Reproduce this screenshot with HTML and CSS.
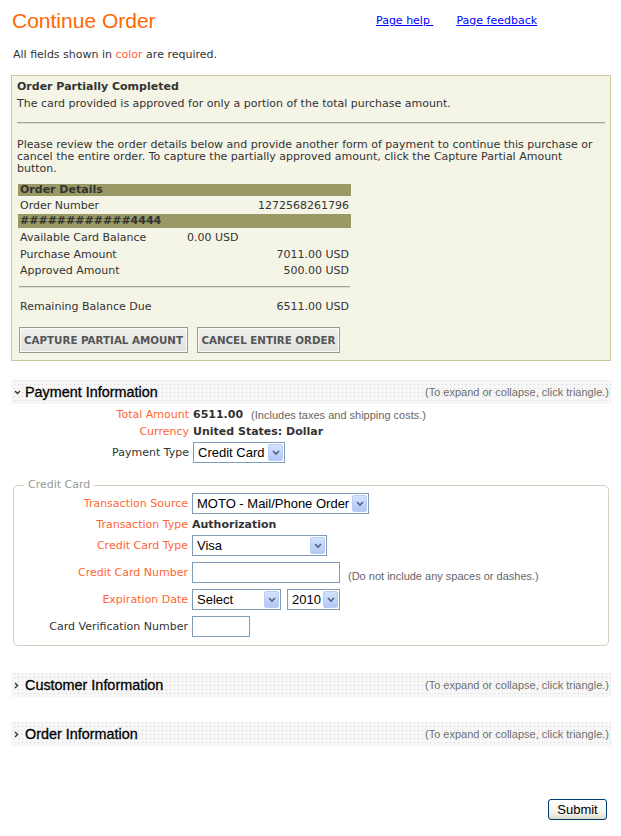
FILE: index.html
```html
<!DOCTYPE html>
<html lang="en">
<head>
  <meta charset="UTF-8" />
  <meta name="viewport" content="width=device-width, initial-scale=1.0"/>
  <title>Continue Order</title>
  <link rel="stylesheet" href="styles.css">
</head>
<body>
  <div class="page">
    <div class="page-head">
      <h1>Continue Order</h1>
      <div class="help-links">
        <a href="#">Page help </a>
        <a href="#">Page feedback</a>
      </div>
    </div>

    <p class="required-note">All fields shown in <span class="req">color</span> are required.</p>

    <div class="notice">
      <p class="notice-title">Order Partially Completed</p>
      <p class="notice-text">The card provided is approved for only a portion of the total purchase amount.</p>
      <hr class="notice-rule">
      <p class="notice-help">Please review the order details below and provide another form of payment to continue this purchase or cancel the entire order. To capture the partially approved amount, click the Capture Partial Amount button.</p>

      <table class="details">
        <tr class="bar bar-head"><td colspan="3">Order Details</td></tr>
        <tr class="order-row"><td class="col-label">Order Number</td><td></td><td class="num">1272568261796</td></tr>
        <tr class="bar bar-card"><td colspan="3">############4444</td></tr>
        <tr class="first-row"><td class="col-label">Available Card Balance</td><td>0.00 USD</td><td></td></tr>
        <tr class="amount-row"><td class="col-label">Purchase Amount</td><td></td><td class="num">7011.00 USD</td></tr>
        <tr class="amount-row"><td class="col-label">Approved Amount</td><td></td><td class="num">500.00 USD</td></tr>
        <tr class="rule-row"><td colspan="3"><div class="line"></div></td></tr>
        <tr class="total-row"><td class="col-label">Remaining Balance Due</td><td></td><td class="num">6511.00 USD</td></tr>
      </table>

      <div class="notice-buttons">
        <button class="grey-btn btn-capture">CAPTURE PARTIAL AMOUNT</button>
        <button class="grey-btn btn-cancel">CANCEL ENTIRE ORDER</button>
      </div>
    </div>

    <div class="section-head section-payment">
      <span class="twisty"><svg width="7" height="5" viewBox="0 0 7 5"><polyline points="1,1 3.5,3.5 6,1" fill="none" stroke="#333" stroke-width="1.4"/></svg></span>
      <span class="section-title">Payment Information</span>
      <span class="section-hint">(To expand or collapse, click triangle.)</span>
    </div>

    <div class="pay-rows">
      <div class="row text-row">
        <span class="label req">Total Amount</span>
        <span class="value"><b>6511.00</b><span class="hint">(Includes taxes and shipping costs.)</span></span>
      </div>
      <div class="row text-row">
        <span class="label req">Currency</span>
        <span class="value"><b>United States: Dollar</b></span>
      </div>
      <div class="row field-row pay-type">
        <span class="label">Payment Type</span>
        <span class="value">
          <span class="select w-paytype"><select><option>Credit Card</option></select><span class="select-btn"><svg width="8" height="6" viewBox="0 0 8 6"><polyline points="1,1 4,4 7,1" fill="none" stroke="#4d6185" stroke-width="1.6"/></svg></span></span>
        </span>
      </div>
    </div>

    <fieldset class="card-box">
      <legend>Credit Card</legend>
      <div class="row field-row">
        <span class="label req">Transaction Source</span>
        <span class="value">
          <span class="select w-source"><select><option>MOTO - Mail/Phone Order</option></select><span class="select-btn"><svg width="8" height="6" viewBox="0 0 8 6"><polyline points="1,1 4,4 7,1" fill="none" stroke="#4d6185" stroke-width="1.6"/></svg></span></span>
        </span>
      </div>
      <div class="row field-row">
        <span class="label req">Transaction Type</span>
        <span class="value"><b>Authorization</b></span>
      </div>
      <div class="row field-row">
        <span class="label req">Credit Card Type</span>
        <span class="value">
          <span class="select w-cardtype"><select><option>Visa</option></select><span class="select-btn"><svg width="8" height="6" viewBox="0 0 8 6"><polyline points="1,1 4,4 7,1" fill="none" stroke="#4d6185" stroke-width="1.6"/></svg></span></span>
        </span>
      </div>
      <div class="row field-row spaced">
        <span class="label req">Credit Card Number</span>
        <span class="value">
          <input type="text" class="text-input w-cardnum">
          <span class="hint hint-low">(Do not include any spaces or dashes.)</span>
        </span>
      </div>
      <div class="row field-row spaced">
        <span class="label req">Expiration Date</span>
        <span class="value gap-6">
          <span class="select w-month"><select><option>Select</option></select><span class="select-btn"><svg width="8" height="6" viewBox="0 0 8 6"><polyline points="1,1 4,4 7,1" fill="none" stroke="#4d6185" stroke-width="1.6"/></svg></span></span>
          <span class="select w-year"><select><option>2010</option></select><span class="select-btn"><svg width="8" height="6" viewBox="0 0 8 6"><polyline points="1,1 4,4 7,1" fill="none" stroke="#4d6185" stroke-width="1.6"/></svg></span></span>
        </span>
      </div>
      <div class="row field-row spaced">
        <span class="label">Card Verification Number</span>
        <span class="value"><input type="text" class="text-input w-cvn"></span>
      </div>
    </fieldset>

    <div class="section-head section-customer">
      <span class="twisty"><svg width="5" height="7" viewBox="0 0 5 7"><polyline points="1,1 3.5,3.5 1,6" fill="none" stroke="#333" stroke-width="1.4"/></svg></span>
      <span class="section-title">Customer Information</span>
      <span class="section-hint">(To expand or collapse, click triangle.)</span>
    </div>

    <div class="section-head section-order">
      <span class="twisty"><svg width="5" height="7" viewBox="0 0 5 7"><polyline points="1,1 3.5,3.5 1,6" fill="none" stroke="#333" stroke-width="1.4"/></svg></span>
      <span class="section-title">Order Information</span>
      <span class="section-hint">(To expand or collapse, click triangle.)</span>
    </div>

    <div class="submit-bar">
      <button class="submit-btn">Submit</button>
    </div>
  </div>
</body>
</html>
```

FILE: styles.css
```css
* {
  box-sizing: border-box;
}

body {
  margin: 0;
  background: #fff;
  color: #333;
  font-family: "DejaVu Sans", Verdana, sans-serif;
  font-size: 11px;
}

.page {
  width: 621px;
  padding: 0 10px 0 11px;
}

/* header */

.page-head {
  display: flex;
  align-items: flex-start;
  padding-top: 9px;
}

h1 {
  margin: 0;
  width: 365px;
  padding-left: 1px;
  font: normal 21px/24px "Liberation Sans", Arial, sans-serif;
  color: #ff6600;
}

.help-links {
  display: flex;
  gap: 23px;
  margin-top: 5px;
  line-height: 14px;
}

.help-links a {
  color: #0000ff;
  white-space: pre;
}

.required-note {
  margin: 15px 0 13px 2px;
  line-height: 14px;
}

.req {
  color: #ff6633;
}

/* partial approval notice */

.notice {
  background: #f5f5e7;
  border: 1px solid #c9c79a;
  padding: 4px 5px 7px 5px;
}

.notice p {
  margin: 0;
}

.notice-title {
  font-weight: bold;
  line-height: 14px;
}

.notice-text {
  margin-top: 3px !important;
  line-height: 14px;
}

.notice-rule {
  margin: 11px 0 0;
  border: 0;
  border-top: 1px solid #a5a59c;
  border-bottom: 1px solid #dcdcd0;
  height: 0;
}

.notice-help {
  margin-top: 15px !important;
  line-height: 12px;
}

.details {
  margin: 9px 0 0 1px;
  width: 333px;
  border-collapse: collapse;
}

.details td {
  padding: 0 2px;
  vertical-align: middle;
  white-space: nowrap;
}

.details .col-label {
  width: 167px;
}

.details .num {
  text-align: right;
}

.bar td {
  background: #999966;
  color: #333;
  font-weight: bold;
}

.bar-head td {
  height: 12px;
  line-height: 12px;
}

.order-row td {
  height: 18px;
}

.bar-card td {
  height: 14px;
  line-height: 14px;
}

.first-row td {
  height: 18px;
  padding-top: 1px;
}

.amount-row td {
  height: 16px;
}

.rule-row td {
  height: 18px;
  padding: 0 1px;
}

.rule-row .line {
  border-top: 1px solid #a5a59c;
  border-bottom: 1px solid #dcdcd0;
}

.total-row td {
  height: 20px;
}

.notice-buttons {
  display: flex;
  gap: 9px;
  margin: 11px 0 0 2px;
}

.grey-btn {
  height: 26px;
  padding: 0;
  background: linear-gradient(#f0f0ee, #e0e0dc);
  border: 1px solid #9a9a94;
  box-shadow: inset 0 0 0 1px #fbfbf8;
  color: #555;
  font: bold 10.3px "DejaVu Sans", Verdana, sans-serif;
}

.btn-capture { width: 169px; }
.btn-cancel { width: 143px; }

/* collapsible section bars */

.section-head {
  display: flex;
  align-items: center;
  height: 24px;
  padding: 0 2px 0 3px;
  background:
    linear-gradient(90deg, #f7f7f7 3px, transparent 3px) 0 1px / 4px 4px,
    linear-gradient(#f7f7f7 3px, transparent 3px) 0 1px / 4px 4px,
    #d2d2d2;
}

.section-payment {
  margin-top: 19px;
}

.section-customer {
  margin-top: 27px;
}

.section-order {
  margin-top: 25px;
}

.twisty {
  width: 11px;
  display: flex;
  align-items: center;
}

.section-title {
  font: normal 14.4px "Liberation Sans", Arial, sans-serif;
  color: #000;
  -webkit-text-stroke: 0.3px #000;
}

.section-hint {
  margin-left: auto;
  font: 11px "Liberation Sans", Arial, sans-serif;
  color: #6f6f6f;
}

/* form rows */

.row {
  display: grid;
  grid-template-columns: 178px 1fr;
  column-gap: 4px;
  align-items: center;
}

.label {
  text-align: right;
  white-space: nowrap;
}

.value {
  display: flex;
  align-items: center;
  white-space: nowrap;
}

.value b {
  color: #333;
}

.hint {
  margin-left: 8px;
  font: 11px "Liberation Sans", Arial, sans-serif;
  color: #666;
}

.hint-low {
  padding-top: 7px;
}

.pay-rows {
  padding-top: 2px;
}

.text-row {
  height: 17px;
}

.pay-type {
  margin-top: 2px;
}

.field-row {
  height: 21px;
}

.spaced {
  margin-top: 6px;
}

.gap-6 {
  gap: 6px;
}

.card-box {
  margin: 15px 2px 0;
  padding: 1px 0 8px;
  border: 1px solid #d0d0bf;
  border-radius: 5px;
}

.card-box .row {
  grid-template-columns: 174px 1fr;
}

.card-box legend {
  margin-left: 10px;
  padding: 0 4px;
  line-height: 14px;
  color: #999;
}

/* inputs and selects */

.text-input {
  height: 21px;
  border: 1px solid #7f9db9;
  background: #fff;
  font: 13px "Liberation Sans", Arial, sans-serif;
}

.w-cardnum { width: 148px; }
.w-cvn { width: 58px; }

.select {
  position: relative;
  display: inline-block;
  height: 21px;
}

.select select {
  appearance: none;
  width: 100%;
  height: 21px;
  margin: 0;
  padding: 0 18px 0 4px;
  border: 1px solid #7f9db9;
  border-radius: 0;
  background: #fff;
  color: #000;
  font: 13px "Liberation Sans", Arial, sans-serif;
}

.select-btn {
  position: absolute;
  top: 2px;
  right: 2px;
  width: 15px;
  height: 17px;
  border: 1px solid #b9ccf4;
  border-radius: 2px;
  background: linear-gradient(#d4e2fe, #b3c7f5);
  display: flex;
  align-items: center;
  justify-content: center;
  pointer-events: none;
}

.w-paytype { width: 92px; }
.w-source { width: 177px; }
.w-cardtype { width: 135px; }
.w-month { width: 89px; }
.w-year { width: 53px; }

/* submit */

.submit-bar {
  display: flex;
  justify-content: flex-end;
  margin-top: 53px;
  padding-right: 4px;
}

.submit-btn {
  width: 59px;
  height: 21px;
  padding: 0;
  border: 1px solid #003c74;
  border-radius: 3px;
  background: linear-gradient(#ffffff, #f3f2ea 70%, #dcd9c9);
  color: #000;
  font: 13px "Liberation Sans", Arial, sans-serif;
}
```
